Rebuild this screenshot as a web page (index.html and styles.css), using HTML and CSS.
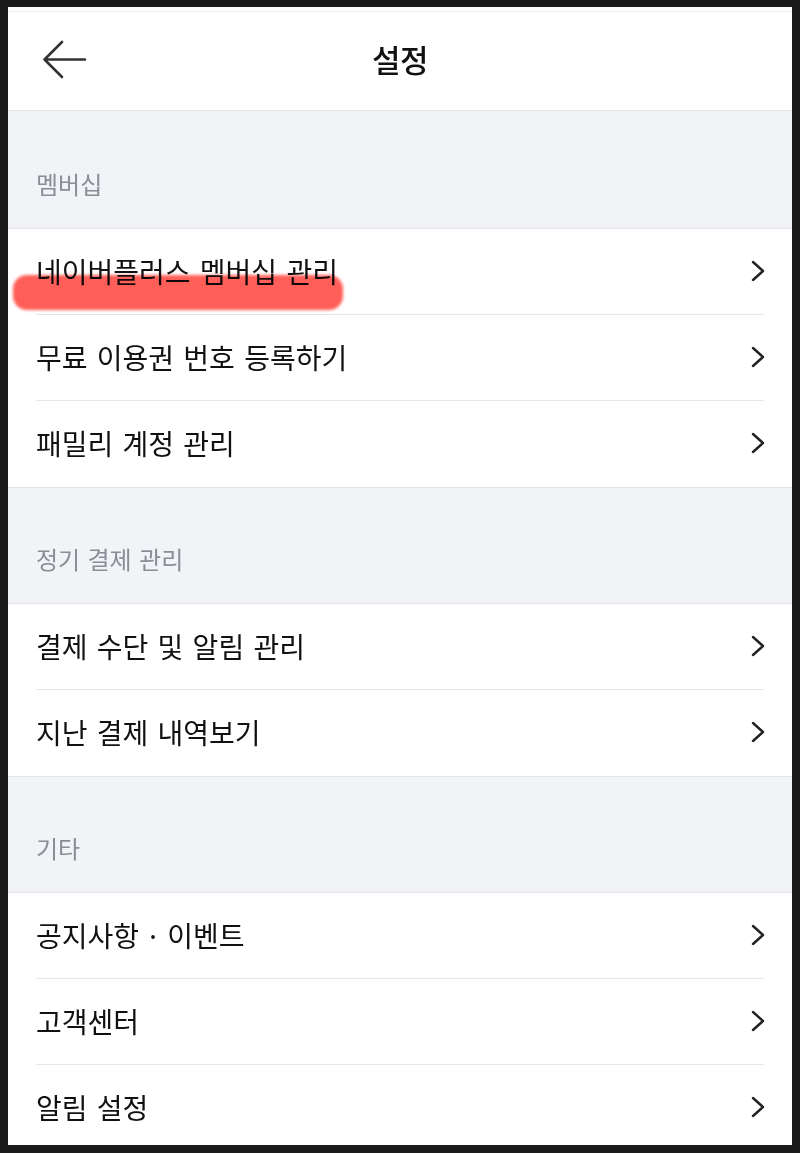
FILE: index.html
```html
<!DOCTYPE html>
<html>
<head>
  <title>설정</title>
  <link rel="stylesheet" href="styles.css">
</head>
<body>
  <div class="screen">
    <div class="header">
      <svg class="back" width="46" height="40" viewBox="0 0 46 40">
        <path d="M43 19.5 H3 M20 2 L2.5 19.5 L20 37" fill="none" stroke="#333" stroke-width="2.6" stroke-linecap="round" stroke-linejoin="round"/>
      </svg>
      <h1 class="title">설정</h1>
    </div>

    <div class="group-title first">멤버십</div>
    <ul class="list">
      <li class="item">네이버플러스 멤버십 관리<svg class="chev" viewBox="0 0 14 22"><polyline points="2,2 12,11 2,20"/></svg></li>
      <li class="item">무료 이용권 번호 등록하기<svg class="chev" viewBox="0 0 14 22"><polyline points="2,2 12,11 2,20"/></svg></li>
      <li class="item">패밀리 계정 관리<svg class="chev" viewBox="0 0 14 22"><polyline points="2,2 12,11 2,20"/></svg></li>
    </ul>

    <div class="group-title">정기 결제 관리</div>
    <ul class="list">
      <li class="item">결제 수단 및 알림 관리<svg class="chev" viewBox="0 0 14 22"><polyline points="2,2 12,11 2,20"/></svg></li>
      <li class="item">지난 결제 내역보기<svg class="chev" viewBox="0 0 14 22"><polyline points="2,2 12,11 2,20"/></svg></li>
    </ul>

    <div class="group-title">기타</div>
    <ul class="list">
      <li class="item"><span class="tight">공지사항 · 이벤트</span><svg class="chev" viewBox="0 0 14 22"><polyline points="2,2 12,11 2,20"/></svg></li>
      <li class="item">고객센터<svg class="chev" viewBox="0 0 14 22"><polyline points="2,2 12,11 2,20"/></svg></li>
      <li class="item">알림 설정<svg class="chev" viewBox="0 0 14 22"><polyline points="2,2 12,11 2,20"/></svg></li>
    </ul>

    <div class="marker"></div>
  </div>
</body>
</html>
```

FILE: styles.css
```css
html, body {
    margin: 0;
    padding: 0;
    background-color: #1a1a1a;
}
body {
    font-family: "Noto Sans CJK KR", "Noto Sans", sans-serif;
    padding: 7px 8px 8px 8px;
}
.screen {
    position: relative;
    height: 1138px;
    overflow: hidden;
    background-color: #fff;
}
.header {
    position: relative;
    height: 103px;
    display: flex;
    align-items: center;
    justify-content: center;
    border-top: 4px solid #fff;
    box-sizing: border-box;
    box-shadow: inset 0 1px 0 #f0f0f2;
}
.back {
    position: absolute;
    left: 34px;
    top: 29px;
}
.title {
    margin: 0 0 4px 0;
    font-size: 31px;
    font-weight: 500;
    color: #111;
    letter-spacing: -0.5px;
}
.group-title {
    height: 117px;
    box-sizing: border-box;
    padding: 56px 0 0 28px;
    background-color: #f2f3f7;
    border-top: 1px solid #e4e5e9;
    border-bottom: 1px solid #e4e5e9;
    color: #8a8d95;
    font-size: 24px;
    line-height: 30px;
    word-spacing: 2px;
}
.group-title.first {
    height: 119px;
    padding-top: 58px;
}
.list {
    list-style: none;
    margin: 0;
    padding: 0;
}
.item {
    height: 86px;
    margin: 0 28px;
    padding: 0 0 2px 0;
    box-sizing: border-box;
    display: flex;
    align-items: center;
    justify-content: space-between;
    border-bottom: 1px solid #e6e6e8;
    font-size: 28px;
    color: #111;
    word-spacing: 3px;
}
.item .tight {
    word-spacing: 0;
}
.item:last-child {
    border-bottom: none;
}
.chev {
    width: 14px;
    height: 22px;
    margin-right: -1px;
}
.chev polyline {
    fill: none;
    stroke: #222;
    stroke-width: 2.4;
    stroke-linecap: round;
    stroke-linejoin: round;
}
.marker {
    position: absolute;
    left: 5px;
    top: 268px;
    width: 330px;
    height: 35px;
    border-radius: 14px;
    background-color: #ff5f58;
    filter: blur(1.5px);
    mix-blend-mode: multiply;
}
```
